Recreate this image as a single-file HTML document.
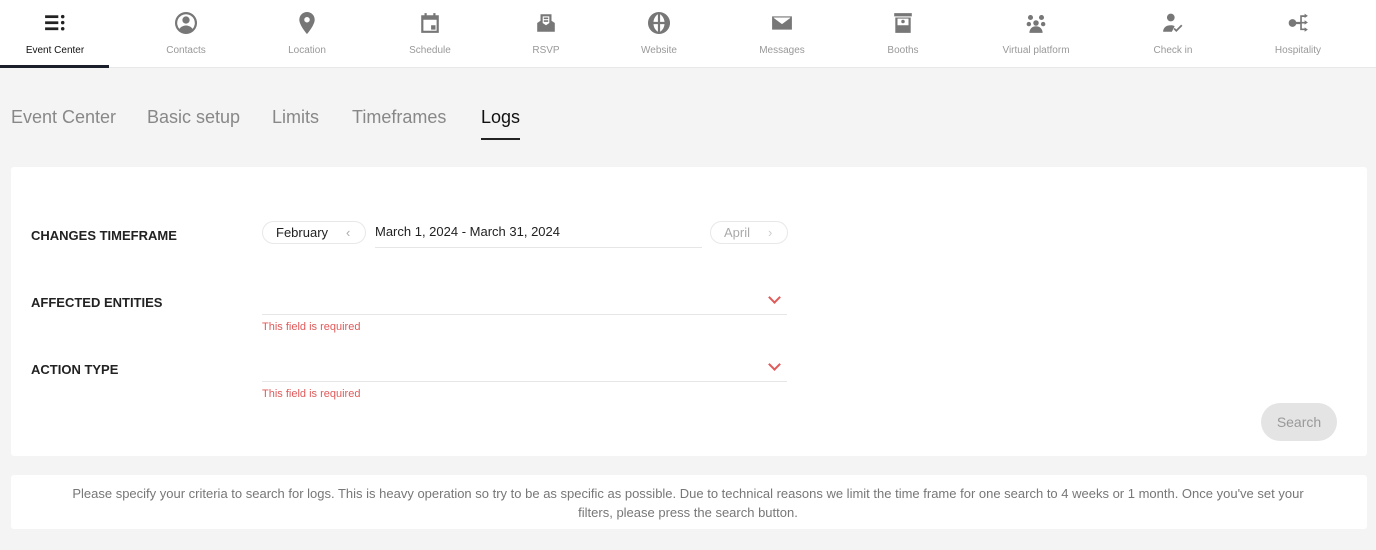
<!DOCTYPE html><html><head><style>
body{margin:0;width:1376px;height:550px;background:#f4f4f4;font-family:"Liberation Sans",sans-serif;position:relative;overflow:hidden}
.nav{position:absolute;left:0;top:0;width:1376px;height:67px;background:#fff;border-bottom:1px solid #e8e8e8}
.it{position:absolute;top:0;width:120px;margin-left:-60px;text-align:center;color:#999;font-size:10px}
.it svg{position:absolute;left:49px;top:12px;width:22px;height:22px;fill:#777}
.it span{position:absolute;top:45px;left:0;width:120px}
.act{color:#111}.act svg{fill:#222}
.ul{position:absolute;left:0;top:65px;width:109px;height:3px;background:#1a1f2b}
.tab{position:absolute;top:107px;font-size:18px;color:#888}
.card{position:absolute;left:11px;width:1356px;background:#fff;border-radius:3px}
.lab{position:absolute;left:31px;font-size:13px;font-weight:bold;color:#222}
.line{position:absolute;left:262px;width:525px;height:1px;background:#e6e6e6}
.err{position:absolute;left:262px;font-size:11px;color:#e05a5a}
.chev{position:absolute;left:770px;width:7px;height:7px;border-right:2px solid #e05a5a;border-bottom:2px solid #e05a5a;transform:rotate(45deg)}
.pill{position:absolute;top:221px;height:21px;border:1px solid #e8e8e8;border-radius:12px;font-size:13px;line-height:21px}
</style></head><body>
<div class="nav">
<div class="it act" style="left:55px"><svg viewBox="0 0 20 20"><rect x="1" y="3" width="12" height="2.5"/><rect x="1" y="8.5" width="12" height="2.5"/><rect x="1" y="14" width="12" height="2.5"/><circle cx="17" cy="4.2" r="1.6"/><circle cx="17" cy="9.7" r="1.6"/><circle cx="17" cy="15.2" r="1.6"/></svg><span>Event Center</span></div>
<div class="it" style="left:186px"><svg viewBox="0 0 20 20"><path d="M10 0a10 10 0 1 0 0.01 0zM10 2a8 8 0 0 1 6 13.3c-1.5-2-3.7-3-6-3s-4.5 1-6 3A8 8 0 0 1 10 2zM10 4a3.3 3.3 0 1 0 0.01 0z"/></svg><span>Contacts</span></div>
<div class="it" style="left:307px"><svg viewBox="0 0 20 20"><path d="M10 0a7 7 0 0 0-7 7c0 5 7 13 7 13s7-8 7-13a7 7 0 0 0-7-7zm0 4.5a2.5 2.5 0 1 1 0 5 2.5 2.5 0 0 1 0-5z"/></svg><span>Location</span></div>
<div class="it" style="left:430px"><svg viewBox="0 0 20 20"><path d="M5 1h2v2h6V1h2v2h3v16H2V3h3zM4 7v10h12V7zm7 5h4v4h-4z"/></svg><span>Schedule</span></div>
<div class="it" style="left:546px"><svg viewBox="0 0 20 20"><path d="M5 2h10v6l3 2v8H2v-8l3-2zm2 2v6l3 2 3-2V4zm1 1h4v1.5H8zm0 2.5h4V9H8z"/></svg><span>RSVP</span></div>
<div class="it" style="left:659px"><svg viewBox="0 0 20 20"><path d="M10 0a10 10 0 1 0 0.01 0zM9 2v7H5c.2-3 1.8-5.5 4-7zm2 0c2.2 1.5 3.8 4 4 7h-4zM5 11h4v7c-2.2-1.5-3.8-4-4-7zm6 0h4c-.2 3-1.8 5.5-4 7z"/></svg><span>Website</span></div>
<div class="it" style="left:782px"><svg viewBox="0 0 20 20"><path d="M1 4h18v12H1zm1.5 1.5L10 11l7.5-5.5V5h-15z" fill-rule="evenodd"/></svg><span>Messages</span></div>
<div class="it" style="left:903px"><svg viewBox="0 0 20 20"><path d="M2 1h16v3H2zm1 4h14v14H3zm2 1v6h10V6zm5 1a1.6 1.6 0 1 1 0 3.2 1.6 1.6 0 0 1 0-3.2zm-2.5 4.5h5" fill-rule="evenodd"/></svg><span>Booths</span></div>
<div class="it" style="left:1036px"><svg viewBox="0 0 20 20"><circle cx="5" cy="5" r="2.3"/><circle cx="15" cy="5" r="2.3"/><circle cx="10" cy="10" r="2.5"/><circle cx="3.5" cy="11" r="2"/><circle cx="16.5" cy="11" r="2"/><path d="M4 19c0-4 3-6 6-6s6 2 6 6z"/></svg><span>Virtual platform</span></div>
<div class="it" style="left:1173px"><svg viewBox="0 0 20 20"><circle cx="8" cy="5" r="3.5"/><path d="M1 18c0-4 3-6 7-6 1.5 0 2.5.3 3.5.8L9 18z"/><path d="M11 15l2 2 5-5" stroke="#777" stroke-width="1.6" fill="none"/></svg><span>Check in</span></div>
<div class="it" style="left:1298px"><svg viewBox="0 0 20 20"><circle cx="5" cy="10" r="3.5"/><path d="M8 9h4V3h4V1.5L19 3.5 16 5.5V4.5h-2.5v4.5H16V7.5l3 2-3 2v-1h-2.5v4.5H16v-1l3 2-3 2v-1.5h-4V11H8z"/></svg><span>Hospitality</span></div>
<div class="ul"></div>
</div>
<div class="tab" style="left:11px">Event Center</div>
<div class="tab" style="left:147px">Basic setup</div>
<div class="tab" style="left:272px">Limits</div>
<div class="tab" style="left:352px">Timeframes</div>
<div class="tab" style="left:481px;color:#111">Logs</div>
<div style="position:absolute;left:481px;top:138px;width:39px;height:2px;background:#222"></div>
<div class="card" style="top:167px;height:289px"></div>
<div class="lab" style="top:228px">CHANGES TIMEFRAME</div>
<div class="pill" style="left:262px;width:102px;color:#222"><span style="position:absolute;left:13px">February</span><span style="position:absolute;left:83px;color:#aaa">‹</span></div>
<div style="position:absolute;left:375px;top:224px;font-size:13px;color:#222">March 1, 2024 - March 31, 2024</div>
<div style="position:absolute;left:375px;top:247px;width:327px;height:1px;background:#e6e6e6"></div>
<div class="pill" style="left:710px;width:76px;color:#aaa"><span style="position:absolute;left:13px">April</span><span style="position:absolute;left:57px;color:#ccc">›</span></div>
<div class="lab" style="top:295px">AFFECTED ENTITIES</div>
<div class="chev" style="top:293px"></div>
<div class="line" style="top:314px"></div>
<div class="err" style="top:321px">This field is required</div>
<div class="lab" style="top:362px">ACTION TYPE</div>
<div class="chev" style="top:360px"></div>
<div class="line" style="top:381px"></div>
<div class="err" style="top:388px">This field is required</div>
<div style="position:absolute;left:1261px;top:403px;width:76px;height:38px;border-radius:19px;background:#e4e4e4;color:#999;font-size:14px;line-height:38px;text-align:center">Search</div>
<div class="card" style="top:475px;height:54px"></div>
<div style="position:absolute;left:68px;top:484px;width:1240px;text-align:center;font-size:13px;line-height:19px;color:#777">Please specify your criteria to search for logs. This is heavy operation so try to be as specific as possible. Due to technical reasons we limit the time frame for one search to 4 weeks or 1 month. Once you've set your filters, please press the search button.</div>
</body></html>
